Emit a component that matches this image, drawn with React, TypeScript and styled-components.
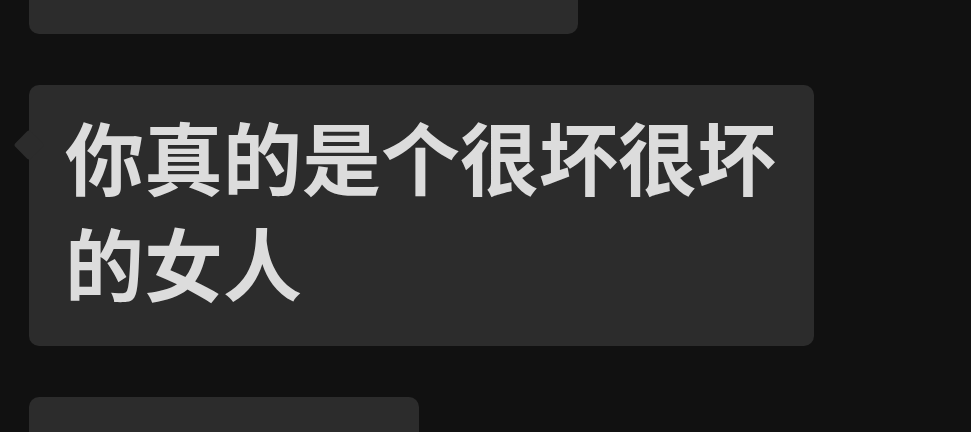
import React from "react";
import styled, { createGlobalStyle } from "styled-components";

const GlobalStyle = createGlobalStyle`
  html, body {
    margin: 0;
    padding: 0;
    background: #111111;
    overflow: hidden;
  }
  body {
    font-family: "Noto Sans CJK SC", "Noto Sans", sans-serif;
  }
`;

const Thread = styled.div`
  height: 432px;
  overflow: hidden;
  background: #111111;
  padding: 0 29px;
  display: flex;
  flex-direction: column;
  align-items: flex-start;
  gap: 51px;
`;

const Bubble = styled.div<{ $width?: number; $height?: number; $tail?: boolean }>`
  position: relative;
  flex-shrink: 0;
  box-sizing: border-box;
  width: ${(p) => (p.$width ? `${p.$width}px` : "auto")};
  max-width: 785px;
  min-height: ${(p) => (p.$height ? `${p.$height}px` : "0")};
  background: #2c2c2c;
  border-radius: 10px;
  padding: 18px 34px 31px 36px;
  color: #dcdcdc;
  font-size: 79px;
  font-weight: 700;
  line-height: 106px;

  ${(p) =>
    p.$tail &&
    `
    &::before {
      content: "";
      position: absolute;
      left: -11px;
      top: 49px;
      width: 22px;
      height: 22px;
      background: #2c2c2c;
      border-radius: 3px;
      transform: rotate(45deg);
    }
  `}
`;

/* The thread is scrolled so only the bottom of the earlier message shows */
const ScrolledBubble = styled(Bubble)`
  margin-top: -60px;
`;

const Text = styled.span`
  position: relative;
`;

export default function App() {
  return (
    <>
      <GlobalStyle />
      <Thread>
        <ScrolledBubble $width={549} $height={94} />
        <Bubble $width={785} $tail>
          <Text>你真的是个很坏很坏的女人</Text>
        </Bubble>
        <Bubble $width={390} $height={120} />
      </Thread>
    </>
  );
}
